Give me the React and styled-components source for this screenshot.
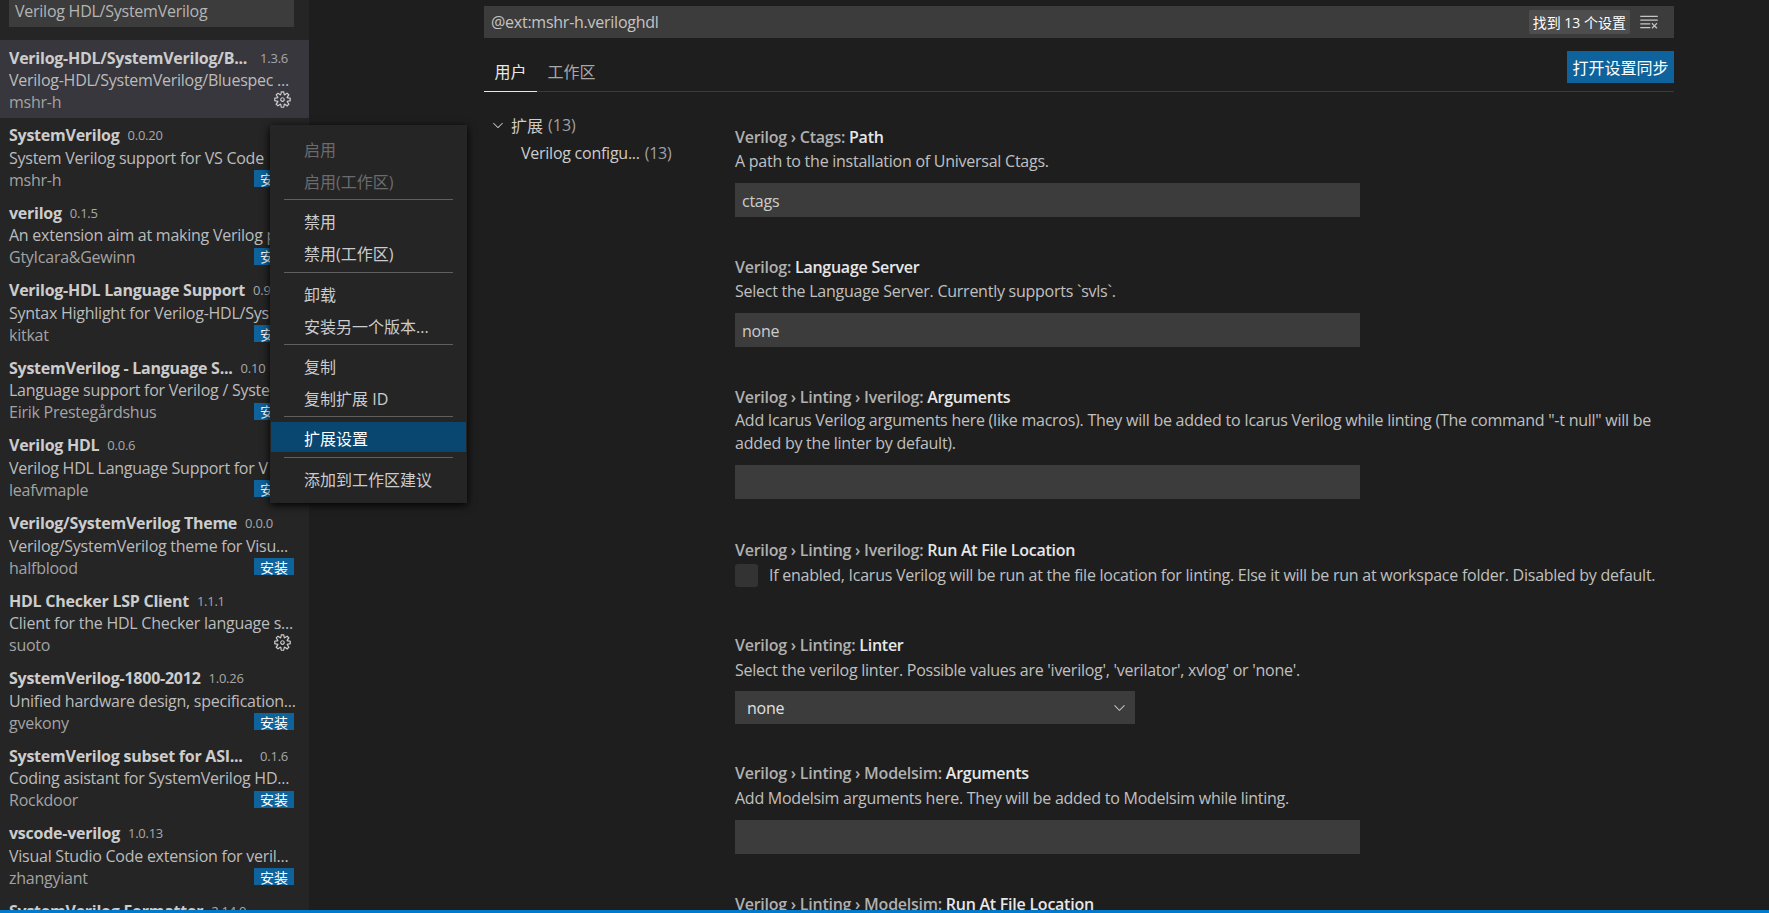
import React from "react";
import styled, { createGlobalStyle } from "styled-components";
import { VscGear, VscChevronDown, VscClearAll } from "react-icons/vsc";

const FONT = `"Open Sans", "Noto Sans CJK SC", sans-serif`;

const Global = createGlobalStyle`
  html, body { margin: 0; height: 100%; background: #1e1e1e; overflow: hidden; }
  #root { height: 100%; }
  * { box-sizing: border-box; }
`;

const Shell = styled.div`
  height: 100vh; display: grid; grid-template-rows: 1fr 3px;
  font-family: ${FONT}; font-size: 16px; color: #ccc; overflow: hidden;
  letter-spacing: -0.25px;
`;
const Body = styled.div`display: flex; min-height: 0; overflow: hidden;`;
const StatusBar = styled.div`background: #007acc;`;

const Sidebar = styled.aside`
  width: 309px; flex: none; background: #252526; overflow: hidden;
`;
const SideSearch = styled.div`
  height: 27px; margin: 0 15px 13px 9px; padding: 0 6px 6px; background: #3c3c3c;
  display: flex; align-items: center; color: #b5b5b5; white-space: nowrap;
`;
const Row = styled.div`
  height: 77.6px; padding: 6px 15px 0 9px; background: ${p => (p.$selected ? "#37373d" : "transparent")};
`;
const TitleLine = styled.div`
  height: 23px; display: flex; align-items: center; white-space: nowrap;
  justify-content: ${p => (p.$spread ? "space-between" : "flex-start")};
  gap: 8px; padding-right: ${p => (p.$spread ? "6px" : "0")};
`;
const ExtName = styled.span`font-weight: 700; color: #ccc;`;
const Version = styled.span`font-size: 13px; color: #a8a8a8;`;
const Desc = styled.div`height: 21px; line-height: 22px; white-space: nowrap; color: #bcbcbc;`;
const PubLine = styled.div`
  height: 22px; display: flex; align-items: center; justify-content: space-between; color: #a3a3a3;
`;
const PubName = styled.span`margin-top: 2px;`;
const Badge = styled.span`
  width: 40px; height: 17px; background: #0e639c; color: #fff; font-size: 14px;
  display: flex; align-items: center; justify-content: center; letter-spacing: 0;
`;
const Gear = styled(VscGear)`font-size: 19px; color: #ccc; margin: 0 2px 3px 0;`;

const Menu = styled.div`
  position: absolute; left: 270px; top: 125px; width: 197px; height: 378px; z-index: 5;
  padding: 8px 1px 0; background: #252526; box-shadow: 0 2px 8px #000;
`;
const MenuItem = styled.div`
  height: ${p => (p.$active ? 30 : 32)}px; padding: ${p => (p.$active ? "2px" : "0")} 0 0 33px;
  display: flex; align-items: center;
  margin-top: ${p => (p.$active ? 1 : 0)}px;
  letter-spacing: 0; white-space: nowrap;
  color: ${p => (p.$disabled ? "#6b6b6b" : p.$active ? "#fff" : "#ccc")};
  background: ${p => (p.$active ? "#094771" : "transparent")};
`;
const MenuRule = styled.div`height: 1px; margin: ${p => p.$top}px 13px 5px; background: #5f5f5f;`;

const Editor = styled.main`flex: 1; min-width: 0; padding: 6px 95px 0 175px; overflow: hidden; background: #1e1e1e;`;
const SearchBar = styled.div`
  height: 32px; background: #3c3c3c; display: flex; align-items: center; padding: 0 7px 0 7px; color: #c4c4c4;
`;
const Query = styled.span`flex: 1;`;
const Count = styled.span`
  height: 24px; padding: 0 4px; display: flex; align-items: center; background: #4d4d4d; border-radius: 2px;
  color: #fff; font-size: 14px; letter-spacing: 0;
`;
const ClearIcon = styled(VscClearAll)`font-size: 20px; color: #c5c5c5; margin: 0 8px 0 9px;`;

const TabBar = styled.div`
  height: 54px; display: flex; justify-content: space-between; align-items: flex-end;
  border-bottom: 1px solid #3a3a3a;
`;
const Tabs = styled.div`display: flex; height: 100%; align-items: flex-end;`;
const Tab = styled.div`
  height: 36px; padding: 0 10.5px 6px; display: flex; align-items: center; letter-spacing: 0;
  color: ${p => (p.$active ? "#e7e7e7" : "#a8a8a8")};
  border-bottom: 1px solid ${p => (p.$active ? "#e7e7e7" : "transparent")};
  margin-bottom: -1px;
`;
const SyncButton = styled.div`
  width: 107px; height: 32px; margin-bottom: 8px; background: #0e639c; color: #fff;
  display: flex; align-items: center; justify-content: center; letter-spacing: 0;
`;

const Columns = styled.div`display: flex;`;
const Toc = styled.nav`width: 251px; flex: none; padding-top: 19px;`;
const TocGroup = styled.div`height: 28px; display: flex; align-items: center; padding-left: 6px; letter-spacing: 0;`;
const TocChevron = styled(VscChevronDown)`font-size: 16px; margin-right: 5px; color: #ccc;`;
const TocItem = styled.div`height: 28px; display: flex; align-items: center; padding-left: 37px; white-space: nowrap;`;
const TocCount = styled.span`color: #a0a0a0; margin-left: 5px;`;

const List = styled.section`flex: 1; min-width: 0; padding-top: 33px;`;
const Setting = styled.article`padding-bottom: ${p => p.$pb}px;`;
const SettingTitle = styled.div`height: 24px; line-height: 24px; font-weight: 600; color: #b0b0b0; white-space: nowrap;`;
const Key = styled.span`color: #e7e7e7;`;
const SettingDesc = styled.div`
  line-height: ${p => p.$lh || 25}px; min-height: ${p => p.$lh || 25}px; color: #c0c0c0;
  margin-bottom: ${p => p.$mb || 9}px; white-space: nowrap;
`;
const TextBox = styled.div`
  width: 625px; height: 34px; background: #3c3c3c; padding: 2px 7px 0; display: flex; align-items: center; color: #ccc;
`;
const CheckRow = styled.div`display: flex; gap: 11px; align-items: center; color: #c0c0c0; white-space: nowrap; height: 23px; margin-top: 2px;`;
const CheckText = styled.span`margin-bottom: 2px;`;
const CheckBox = styled.span`width: 23px; height: 23px; background: #333; border-radius: 3px; flex: none;`;
const SelectBox = styled.div`
  width: 400px; height: 33px; background: #3c3c3c; padding: 0 7px 0 12px; display: flex; align-items: center;
  justify-content: space-between; color: #e0e0e0;
`;

const extensions = [
  { name: "Verilog-HDL/SystemVerilog/B...", v: "1.3.6", d: "Verilog-HDL/SystemVerilog/Bluespec ...", p: "mshr-h", gear: true, selected: true, spread: true },
  { name: "SystemVerilog", v: "0.0.20", d: "System Verilog support for VS Code", p: "mshr-h" },
  { name: "verilog", v: "0.1.5", d: "An extension aim at making Verilog p", p: "GtyIcara&Gewinn" },
  { name: "Verilog-HDL Language Support", v: "0.9", d: "Syntax Highlight for Verilog-HDL/Sys", p: "kitkat" },
  { name: "SystemVerilog - Language S...", v: "0.10", d: "Language support for Verilog / System", p: "Eirik Prestegårdshus" },
  { name: "Verilog HDL", v: "0.0.6", d: "Verilog HDL Language Support for V", p: "leafvmaple" },
  { name: "Verilog/SystemVerilog Theme", v: "0.0.0", d: "Verilog/SystemVerilog theme for Visu...", p: "halfblood" },
  { name: "HDL Checker LSP Client", v: "1.1.1", d: "Client for the HDL Checker language s...", p: "suoto", gear: true },
  { name: "SystemVerilog-1800-2012", v: "1.0.26", d: "Unified hardware design, specification...", p: "gvekony" },
  { name: "SystemVerilog subset for ASI...", v: "0.1.6", d: "Coding asistant for SystemVerilog HD...", p: "Rockdoor", spread: true },
  { name: "vscode-verilog", v: "1.0.13", d: "Visual Studio Code extension for veril...", p: "zhangyiant" },
  { name: "SystemVerilog Formatter", v: "2.14.0", d: "", p: "" },
];

const menu = [
  [{ t: "启用", disabled: true }, { t: "启用(工作区)", disabled: true }],
  [{ t: "禁用" }, { t: "禁用(工作区)" }],
  [{ t: "卸载" }, { t: "安装另一个版本..." }],
  [{ t: "复制" }, { t: "复制扩展 ID" }],
  [{ t: "扩展设置", active: true }],
  [{ t: "添加到工作区建议" }],
];

const ruleTop = [0, 2, 3, 2, 2, 5];

export default function App() {
  return (
    <>
      <Global />
      <Shell>
        <Body>
          <Sidebar>
            <SideSearch>Verilog HDL/SystemVerilog</SideSearch>
            {extensions.map(e => (
              <Row key={e.name} $selected={e.selected}>
                <TitleLine $spread={e.spread}>
                  <ExtName>{e.name}</ExtName>
                  <Version>{e.v}</Version>
                </TitleLine>
                <Desc>{e.d}</Desc>
                <PubLine>
                  <PubName>{e.p}</PubName>
                  {e.gear ? <Gear /> : <Badge>安装</Badge>}
                </PubLine>
              </Row>
            ))}
          </Sidebar>
          <Menu>
            {menu.map((group, i) => (
              <React.Fragment key={i}>
                {i > 0 && <MenuRule $top={ruleTop[i]} />}
                {group.map(item => (
                  <MenuItem key={item.t} $disabled={item.disabled} $active={item.active}>
                    {item.t}
                  </MenuItem>
                ))}
              </React.Fragment>
            ))}
          </Menu>
          <Editor>
            <SearchBar>
              <Query>@ext:mshr-h.veriloghdl</Query>
              <Count>找到 13 个设置</Count>
              <ClearIcon />
            </SearchBar>
            <TabBar>
              <Tabs>
                <Tab $active>用户</Tab>
                <Tab>工作区</Tab>
              </Tabs>
              <SyncButton>打开设置同步</SyncButton>
            </TabBar>
            <Columns>
              <Toc>
                <TocGroup><TocChevron />扩展<TocCount>(13)</TocCount></TocGroup>
                <TocItem>Verilog configu...<TocCount>(13)</TocCount></TocItem>
              </Toc>
              <List>
                <Setting $pb={38}>
                  <SettingTitle>Verilog › Ctags: <Key>Path</Key></SettingTitle>
                  <SettingDesc>A path to the installation of Universal Ctags.</SettingDesc>
                  <TextBox>ctags</TextBox>
                </Setting>
                <Setting $pb={38}>
                  <SettingTitle>Verilog: <Key>Language Server</Key></SettingTitle>
                  <SettingDesc>Select the Language Server. Currently supports `svls`.</SettingDesc>
                  <TextBox>none</TextBox>
                </Setting>
                <Setting $pb={39}>
                  <SettingTitle>Verilog › Linting › Iverilog: <Key>Arguments</Key></SettingTitle>
                  <SettingDesc $lh={23} $mb={10}>
                    Add Icarus Verilog arguments here (like macros). They will be added to Icarus Verilog while linting (The command "-t null" will be
                    <br />
                    added by the linter by default).
                  </SettingDesc>
                  <TextBox />
                </Setting>
                <Setting $pb={46}>
                  <SettingTitle>Verilog › Linting › Iverilog: <Key>Run At File Location</Key></SettingTitle>
                  <CheckRow>
                    <CheckBox />
                    <CheckText>If enabled, Icarus Verilog will be run at the file location for linting. Else it will be run at workspace folder. Disabled by default.</CheckText>
                  </CheckRow>
                </Setting>
                <Setting $pb={37}>
                  <SettingTitle>Verilog › Linting: <Key>Linter</Key></SettingTitle>
                  <SettingDesc $lh={26} $mb={8}>Select the verilog linter. Possible values are 'iverilog', 'verilator', xvlog' or 'none'.</SettingDesc>
                  <SelectBox>none<VscChevronDown size={17} color="#ccc" /></SelectBox>
                </Setting>
                <Setting $pb={38}>
                  <SettingTitle>Verilog › Linting › Modelsim: <Key>Arguments</Key></SettingTitle>
                  <SettingDesc $lh={26} $mb={9}>Add Modelsim arguments here. They will be added to Modelsim while linting.</SettingDesc>
                  <TextBox />
                </Setting>
                <Setting $pb={0}>
                  <SettingTitle>Verilog › Linting › Modelsim: <Key>Run At File Location</Key></SettingTitle>
                </Setting>
              </List>
            </Columns>
          </Editor>
        </Body>
        <StatusBar />
      </Shell>
    </>
  );
}
